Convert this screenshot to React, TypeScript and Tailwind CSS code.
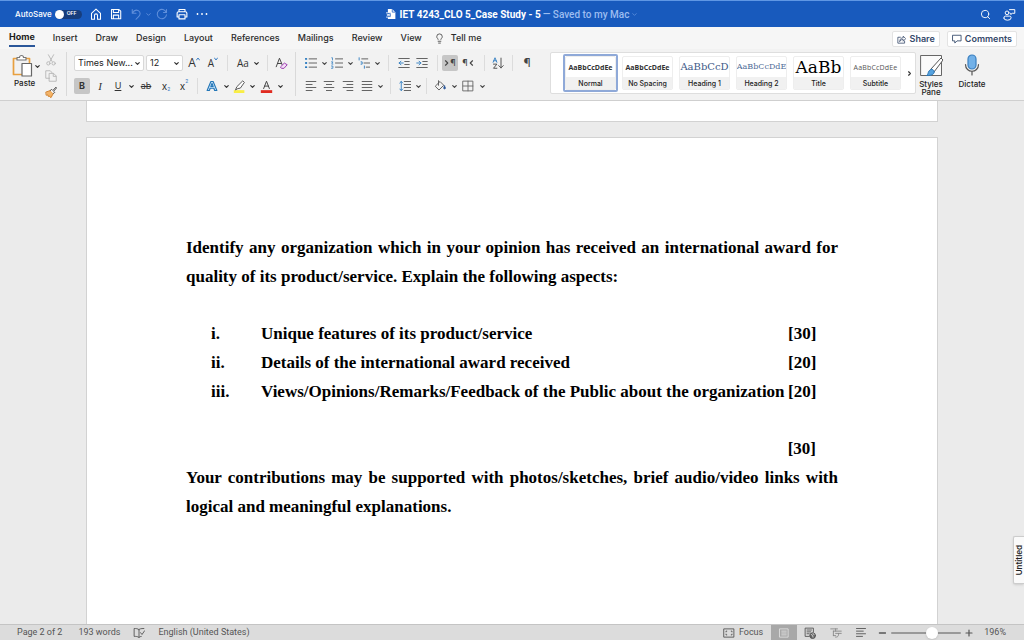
import React, { useState } from "react";
import { ChevronDown, ChevronRight, Search, Lightbulb } from "lucide-react";

type Kids = { children?: React.ReactNode };

function Svg({ children, className = "size-3", box = "0 0 16 16" }: Kids & { className?: string; box?: string }) {
  return (
    <svg
      viewBox={box}
      className={`shrink-0 ${className}`}
      fill="none"
      stroke="currentColor"
      strokeWidth="1.2"
      strokeLinecap="round"
      strokeLinejoin="round"
      aria-hidden="true"
    >
      {children}
    </svg>
  );
}

function Tool({ label, w = "w-5", className = "", children }: Kids & { label: string; w?: string; className?: string }) {
  return (
    <button type="button" aria-label={label} className={`flex h-4 shrink-0 items-center justify-center ${w} ${className}`}>
      {children}
    </button>
  );
}

function More({ label, w = "w-2" }: { label: string; w?: string }) {
  return (
    <Tool label={`${label} options`} w={w}>
      <ChevronDown className="size-[7px] shrink-0" strokeWidth={4} />
    </Tool>
  );
}

function Rule({ w = "w-3" }: { w?: string }) {
  return (
    <span className={`flex h-4 shrink-0 justify-center ${w}`}>
      <span className="w-px bg-[#dcdcdc]" />
    </span>
  );
}

function GroupRule() {
  return <span className="h-11 w-px shrink-0 bg-[#d9d9d9]" />;
}

function Lines({ d }: { d: string }) {
  return (
    <Svg>
      <path d={d} stroke="#555" strokeLinecap="butt" />
    </Svg>
  );
}

const tabs = ["Home", "Insert", "Draw", "Design", "Layout", "References", "Mailings", "Review", "View"];

const styleCards = [
  { name: "Normal", sample: "AaBbCcDdEe", look: "font-['Open_Sans',sans-serif] text-[7px] font-bold text-[#333]" },
  { name: "No Spacing", sample: "AaBbCcDdEe", look: "font-['Open_Sans',sans-serif] text-[7px] font-bold text-[#333]" },
  { name: "Heading 1", sample: "AaBbCcD", look: "font-['DejaVu_Serif',serif] text-[10px] text-[#3d5a87]" },
  { name: "Heading 2", sample: "AaBbCcDdE", look: "font-['DejaVu_Serif',serif] text-[8px] text-[#4f6d97]" },
  { name: "Title", sample: "AaBb", look: "font-['DejaVu_Serif',serif] text-[17px] text-black" },
  { name: "Subtitle", sample: "AaBbCcDdEe", look: "font-['Open_Sans',sans-serif] text-[7px] tracking-wide text-[#555]" },
];

const aspects = [
  { no: "i.", text: "Unique features of its product/service", marks: "[30]" },
  { no: "ii.", text: "Details of the international award received", marks: "[20]" },
  { no: "iii.", text: "Views/Opinions/Remarks/Feedback of the Public about the organization", marks: "[20]" },
];

function TitleBar() {
  return (
    <header className="grid h-[27px] shrink-0 grid-cols-[1fr_auto_1fr] items-center border-t border-[#5f97e4] bg-[#185abd] text-white">
      <div className="flex items-center pl-[15px]">
        <span className="text-[8px] font-medium">AutoSave</span>
        <button
          type="button"
          role="switch"
          aria-checked="false"
          aria-label="AutoSave"
          className="mr-1 ml-[3px] flex h-[9px] w-[27px] items-center gap-[3px] rounded-full bg-[#173d7c] text-[5px] font-semibold"
        >
          <span className="size-[9px] rounded-full bg-white" />
          OFF
        </button>
        <Tool label="Home">
          <Svg>
            <path d="M2 7.2 8 1.5l6 5.7V15h-4V9.8a2 2 0 0 0-4 0V15H2Z" strokeWidth="1.4" />
          </Svg>
        </Tool>
        <Tool label="Save">
          <Svg>
            <path d="M2 2h10l2.3 2.3V14.3H2ZM4.5 2v4h7V2M4.5 14V9.5h7V14" strokeWidth="1.4" />
          </Svg>
        </Tool>
        <Tool label="Undo" className="text-[#5f8fdb]">
          <Svg>
            <path d="M3 2v5h5M3 7c2-3.5 5-5 8-3.5 3.5 2 3 5.5.5 8L8 15" strokeWidth="1.4" />
          </Svg>
        </Tool>
        <Tool label="Undo options" w="w-1.5" className="text-[#5f8fdb]">
          <ChevronDown className="size-[7px] shrink-0" strokeWidth={3} />
        </Tool>
        <Tool label="Redo" className="text-[#5f8fdb]">
          <Svg>
            <path d="M14 2v4h-4M13.7 6A6.2 6.2 0 1 0 14 9" strokeWidth="1.4" />
          </Svg>
        </Tool>
        <Tool label="Print">
          <Svg>
            <path d="M4 5V2h8v3M4 12H1.5V7a2 2 0 0 1 2-2h9a2 2 0 0 1 2 2v5H12M4 9h8v5.5H4Z" strokeWidth="1.5" />
          </Svg>
        </Tool>
        <Tool label="More commands">
          <Svg>
            <path d="M2 8h.01M8 8h.01M14 8h.01" strokeWidth="2.4" />
          </Svg>
        </Tool>
      </div>
      <h1 className="flex items-center font-['Roboto',sans-serif] text-[10px] font-bold whitespace-nowrap">
        <Svg className="mr-1 size-[10px]">
          <path d="M3 0h7l5 5v11H3Z" fill="#fff" stroke="none" />
          <path d="M10 0v5h5" stroke="#185abd" />
          <path d="M0 6h8v7H0Z" fill="#185abd" stroke="#fff" />
          <path d="m2 8 1 3 1-3 1 3 1-3" stroke="#fff" />
        </Svg>
        IET 4243_CLO 5_Case Study - 5
        <span className="ml-0.5 font-medium text-[#9dbdf0]">— Saved to my Mac</span>
        <ChevronDown className="ml-0.5 size-[7px] text-[#7ba5e8]" />
      </h1>
      <div className="flex items-center justify-end gap-1 pr-[5px]">
        <Tool label="Search">
          <Search className="size-[11px]" strokeWidth={2} />
        </Tool>
        <Tool label="Collaborate">
          <Svg className="size-[13px]">
            <circle cx="5" cy="6" r="2.3" />
            <path d="M1 12.500Q1 10 3 10h5q2 0 2 2 0 3-4.500 3T1 12.500M8 2h6.500v4.500h-3L9.500 8V6.500" />
          </Svg>
        </Tool>
      </div>
    </header>
  );
}

function TabBar() {
  return (
    <nav className="flex h-[22px] shrink-0 items-center justify-between bg-[#f6f6f6] pr-[7px] pl-[9px] text-[#2b2b2b]">
      <div className="flex h-full items-center gap-[18px] text-[9px] font-medium">
        {tabs.map((t, i) => (
          <button
            type="button"
            key={t}
            className={
              i === 0
                ? "flex h-5 items-center self-start border-b-2 border-[#2b579a] pt-0.5 font-bold text-[#1c1c1c]"
                : "flex h-full items-center"
            }
          >
            {t}
          </button>
        ))}
        <button type="button" className="-ml-1.5 flex items-center gap-1.5">
          <Lightbulb className="size-[11px]" strokeWidth={1.6} />
          Tell me
        </button>
      </div>
      <div className="flex gap-[7px] pt-0.5 text-[9px] font-semibold text-[#35496a]">
        <button type="button" className="flex h-4 items-center gap-1 rounded-xs border border-[#e3e3e3] bg-white px-1">
          <Svg className="size-[9px]">
            <path d="M6 4H1.5v10.500h12V11M5 11c0-4 2.500-6 6-6V2l4.500 4.500L11 11V8c-3 0-4.500.8-6 3Z" strokeWidth="1.4" />
          </Svg>
          Share
        </button>
        <button type="button" className="flex h-4 items-center gap-[3px] rounded-xs border border-[#e3e3e3] bg-white px-1">
          <Svg className="size-[10px]">
            <path d="M1.5 2h13v9H8l-3.500 3.500V11h-3Z" strokeWidth="1.4" />
          </Svg>
          Comments
        </button>
      </div>
    </nav>
  );
}

function ClipboardGroup() {
  return (
    <div className="flex w-[66px] shrink-0 justify-between pr-[9px] pl-3">
      <div className="flex flex-col pt-0.5">
        <div className="flex items-center">
          <button type="button" aria-label="Paste clipboard">
            <Svg className="h-6 w-[22px]" box="0 0 22 24">
              <path d="M5 4.500H1.500v16h8M14 4.500h3.500v4" stroke="#e8a040" strokeWidth="1.7" />
              <path d="M5 6V3.500h2.500a2 2 0 0 1 4 0H14V6Z" fill="#fff" stroke="#777" />
              <path d="M10 9.500h9.500v12.500H10Z" fill="#fff" stroke="#666" />
            </Svg>
          </button>
          <More label="Paste" w="w-1.5" />
        </div>
        <span className="pl-0.5 text-[8px] leading-[10px] font-medium text-[#222]">Paste</span>
      </div>
      <div className="flex flex-col items-center">
        <Tool label="Cut" w="w-3" className="text-[#b5b5b5]">
          <Svg>
            <path d="m4.500 1 5 9M11.500 1l-5 9" />
            <circle cx="4.500" cy="12.500" r="2.2" />
            <circle cx="11.500" cy="12.500" r="2.2" />
          </Svg>
        </Tool>
        <Tool label="Copy" w="w-3" className="text-[#b5b5b5]">
          <Svg>
            <path d="M6 11H1V1h6l2 2v1M6 4.500h5.500L15 8v7H6ZM11 5v3.500h3.500" />
          </Svg>
        </Tool>
        <Tool label="Format painter" w="w-3">
          <Svg>
            <path d="M1.5 8 7 6l4 4-3 5.500-2.500-2-1 .5-.5-2-2 .2Z" fill="#f3b367" stroke="#cf7f2a" />
            <path d="m7 6 2-1.500L10.500 6l4-4.500 1 1-4 4.500 1.500 1.500L11 10" stroke="#444" fill="#fff" />
          </Svg>
        </Tool>
      </div>
    </div>
  );
}

function FontGroup() {
  return (
    <div className="flex w-[228px] shrink-0 flex-col gap-[7px] pt-[3px] pl-[7px] text-[#333]">
      <div className="flex items-center">
        <label className="relative mr-0.5 flex h-4 w-[70px] items-center rounded-xs border border-[#d8d8d8] bg-white">
          <select aria-label="Font" className="w-full appearance-none pl-[3px] text-[9px] text-[#222]">
            <option>Times New...</option>
          </select>
          <ChevronDown className="pointer-events-none absolute right-0.5 size-[7px]" strokeWidth={4} />
        </label>
        <label className="relative flex h-4 w-[37px] items-center rounded-xs border border-[#d8d8d8] bg-white">
          <select aria-label="Font size" className="w-full appearance-none pl-[3px] text-[9px] text-[#222]">
            <option>12</option>
          </select>
          <ChevronDown className="pointer-events-none absolute right-0.5 size-[7px]" strokeWidth={4} />
        </label>
        <Tool label="Increase font size" w="w-[22px]">
          <span className="font-['Open_Sans',sans-serif] text-[12px]">A</span>
          <Svg className="mb-2 size-1" box="0 0 8 8"><path d="m1 6 3-4 3 4" stroke="#3b7fc4" strokeWidth="2" /></Svg>
        </Tool>
        <Tool label="Decrease font size" w="w-4">
          <span className="font-['Open_Sans',sans-serif] text-[10px]">A</span>
          <Svg className="mb-2 size-1" box="0 0 8 8"><path d="m1 2 3 4 3-4" stroke="#3b7fc4" strokeWidth="2" /></Svg>
        </Tool>
        <Rule />
        <Tool label="Change case"><span className="font-['Open_Sans',sans-serif] text-[10px]">Aa</span></Tool>
        <More label="Change case" w="w-1.5" />
        <Rule w="w-4" />
        <Tool label="Clear formatting" w="w-3">
          <Svg className="size-[13px]">
            <path d="m1.500 12 4-10.500L9 10M3 8h5" stroke="#444" />
            <path d="m7 12 4.500-4.500 3.500 2L11 14H8.500Z" fill="#f4dcf7" stroke="#9b3fb0" />
          </Svg>
        </Tool>
      </div>
      <div className="flex items-center">
        <Tool label="Bold" w="w-4" className="rounded-xs bg-[#c6c6c6] text-[9px] font-bold">B</Tool>
        <Tool label="Italic"><span className="font-['Liberation_Serif',serif] text-[11px] italic">I</span></Tool>
        <Tool label="Underline" w="w-4"><span className="text-[9px] underline">U</span></Tool>
        <More label="Underline" w="w-2.5" />
        <Tool label="Strikethrough"><span className="text-[9px] line-through">ab</span></Tool>
        <Tool label="Subscript">
          <span className="text-[10px]">x</span><span className="pt-2 text-[5px] text-[#3b7fc4]">2</span>
        </Tool>
        <Tool label="Superscript" w="w-4">
          <span className="text-[10px]">x</span><span className="pb-2 text-[5px] text-[#3b7fc4]">2</span>
        </Tool>
        <Rule w="w-2.5" />
        <Tool label="Text effects">
          <Svg>
            <path d="M1.5 14 6.500 2h3l5 12h-3l-1-3h-5l-1 3ZM6.500 8.500h3L8 4.500Z" fill="#cfe6fa" stroke="#2376b7" strokeWidth="1.5" />
          </Svg>
        </Tool>
        <More label="Text effects" />
        <Tool label="Highlight" w="w-[18px]">
          <Svg className="size-[13px]">
            <path d="M1 12.500h13V16H1Z" fill="#f9ee45" stroke="none" />
            <path d="m5 8 7-7 2 2-5 7-3 .5-2.500 1.500Z" fill="#fff" stroke="#555" />
          </Svg>
        </Tool>
        <More label="Highlight" />
        <Tool label="Font color">
          <Svg className="size-[13px]">
            <path d="M1 12.500h14V16H1Z" fill="#e02b20" stroke="none" />
            <path d="M4.500 10.500 8 1.500l3.500 9M5.500 7.500h5" stroke="#444" />
          </Svg>
        </Tool>
        <More label="Font color" />
      </div>
    </div>
  );
}

function ParagraphGroup() {
  return (
    <div className="flex w-[247px] shrink-0 flex-col gap-[7px] pt-[3px] pl-1.5 text-[#444]">
      <div className="flex items-center">
        <Tool label="Bullets" w="w-[18px]">
          <Svg>
            <path d="M5.500 2.500H16M5.500 8H16M5.500 13.500H16" stroke="#555" />
            <path d="M1 2.500h.8M1 8h.8M1 13.500h.8" stroke="#2b7bc0" strokeWidth="2.4" />
          </Svg>
        </Tool>
        <More label="Bullets" />
        <Tool label="Numbering" w="w-[18px]">
          <Svg>
            <path d="M6 2.500h10M6 8h10M6 13.500h10" stroke="#555" />
            <path d="M1 1h1v3M.5 6.500h2L1 9.500h1.500M.5 12h2v3h-2" stroke="#2b7bc0" strokeWidth="1" />
          </Svg>
        </Tool>
        <More label="Numbering" />
        <Tool label="Multilevel list" w="w-5">
          <Svg>
            <path d="M5 2.500h8M8 8h8M11 13.500h5" stroke="#555" />
            <path d="M1.5 1v3M4 6.500h1.500v3H4M8.500 12v3" stroke="#2b7bc0" />
          </Svg>
        </Tool>
        <More label="Multilevel list" w="w-1.5" />
        <Rule w="w-4" />
        <Tool label="Decrease indent" w="w-4">
          <Svg>
            <path d="M1 2h14M9 6h6M9 10h6M1 14h14" stroke="#555" />
            <path d="M7 8H1.500M4 5.500 1.500 8 4 10.500" stroke="#2b7bc0" />
          </Svg>
        </Tool>
        <Tool label="Increase indent">
          <Svg>
            <path d="M1 2h14M9 6h6M9 10h6M1 14h14" stroke="#555" />
            <path d="M1 8h5.500M4 5.500 6.500 8 4 10.500" stroke="#2b7bc0" />
          </Svg>
        </Tool>
        <Rule w="w-2.5" />
        <Tool label="Left to right" w="w-4" className="rounded-xs bg-[#c6c6c6] text-[9px]">
          <Svg className="size-1.5" box="0 0 8 8"><path d="m2 1 3 3-3 3" strokeWidth="1.5" /></Svg>¶
        </Tool>
        <Tool label="Right to left" className="text-[9px]">
          ¶<Svg className="size-1.5" box="0 0 8 8"><path d="M6 1 3 4l3 3" strokeWidth="1.5" /></Svg>
        </Tool>
        <Rule />
        <Tool label="Sort" w="w-4">
          <Svg>
            <path d="m1.500 7 2.500-6 2.500 6M2.500 5h3" stroke="#2b7bc0" />
            <path d="M2 9.500h4.500L2 15h4.500M12 1.500v13M9 11.500l3 3 3-3" stroke="#444" />
          </Svg>
        </Tool>
        <Rule />
        <Tool label="Show marks" w="w-[18px]" className="text-[12px]">¶</Tool>
      </div>
      <div className="flex items-center">
        <Tool label="Align left" w="w-[18px]"><Lines d="M1 2h14M1 6h9M1 10h14M1 14h9" /></Tool>
        <Tool label="Center" w="w-[18px]"><Lines d="M1 2h14M4 6h8M1 10h14M4 14h8" /></Tool>
        <Tool label="Align right"><Lines d="M1 2h14M6 6h9M1 10h14M6 14h9" /></Tool>
        <Tool label="Justify" w="w-[18px]"><Lines d="M1 2h14M1 6h14M1 10h14M1 14h14" /></Tool>
        <More label="Justify" />
        <Rule />
        <Tool label="Line spacing" w="w-[18px]">
          <Svg>
            <path d="M7 2h9M7 6h9M7 10h9M7 14h9" stroke="#555" />
            <path d="M3 2v12M1 4l2-2 2 2M1 12l2 2 2-2" stroke="#2b7bc0" />
          </Svg>
        </Tool>
        <More label="Line spacing" />
        <Rule w="w-2" />
        <Tool label="Shading">
          <Svg>
            <path d="m2 8 6-6 5 5-6 6ZM6 1v6" stroke="#555" />
            <path d="M14 8c2 3 1 4 0 4s-1.500-1.500 0-4Z" fill="#2b579a" stroke="#2b579a" />
          </Svg>
        </Tool>
        <More label="Shading" />
        <Tool label="Borders">
          <Svg><path d="M1.5 1.500h13v13h-13ZM8 1.500v13M1.500 8h13" stroke="#666" /></Svg>
        </Tool>
        <More label="Borders" />
      </div>
    </div>
  );
}

function StylesGallery() {
  const [picked, setPicked] = useState("Normal");
  return (
    <div className="ml-[7px] flex h-[42px] min-w-[366px] items-center rounded-xs border border-[#dedede] bg-white pl-3">
      <div className="flex items-center gap-0.5">
        {styleCards.map((s) => (
          <button
            type="button"
            key={s.name}
            onClick={() => setPicked(s.name)}
            className={`flex h-[38px] w-[55px] shrink-0 rounded-xs border ${
              picked === s.name ? "border-2 border-[#8fa9d8] p-0" : "border-transparent p-px"
            }`}
          >
            <span className="flex h-full w-full flex-col overflow-hidden rounded-xs border border-[#eeeeee] bg-white">
              <span className={`flex flex-1 items-center justify-center leading-none whitespace-nowrap ${s.look}`}>{s.sample}</span>
              <span className="h-3 bg-[#f1f1f1] text-center text-[7px] leading-[13px] font-medium whitespace-nowrap text-[#222]">{s.name}</span>
            </span>
          </button>
        ))}
      </div>
      <Tool label="More styles" w="w-3" className="text-[#333]">
        <ChevronRight className="size-[7px]" strokeWidth={4} />
      </Tool>
    </div>
  );
}

function Ribbon() {
  return (
    <section aria-label="Home ribbon" className="flex h-[52px] shrink-0 items-start border-b border-[#cfcfcf] bg-[#f2f2f2] pt-[3px] text-[#333]">
      <ClipboardGroup />
      <GroupRule />
      <FontGroup />
      <GroupRule />
      <ParagraphGroup />
      <StylesGallery />
      <button type="button" className="flex w-[30px] shrink-0 flex-col items-center text-[8px] leading-2 font-medium text-[#222]">
        <Svg className="mt-0.5 mb-[3px] size-[23px]" box="0 0 23 23">
          <path d="M1 1.500h20.500v20H1Z" fill="#fafafa" stroke="#666" strokeWidth="1" />
          <path d="m11 15 10-11 2 2-9 12Z" fill="#fff" stroke="#555" strokeWidth="1" />
          <path d="M7 21.500c1-1 1-3 2-4.500 2-2.500 4-2 5 0 1 2.500-2 5-7 4.500Z" fill="#55a2df" stroke="#2b75b3" strokeWidth="1" />
        </Svg>
        <span>Styles</span>
        <span>Pane</span>
      </button>
      <span className="ml-1"><GroupRule /></span>
      <button type="button" className="flex w-11 shrink-0 flex-col items-center text-[8px] leading-2 font-medium text-[#222]">
        <Svg className="mt-0.5 mb-[3px] h-[23px] w-4" box="0 0 16 23">
          <path d="M1.5 10.500c0 9 13 9 13 0M8 17.500V21" stroke="#555" />
          <rect x="4" y="1" width="8" height="14" rx="4" fill="#72b1e8" stroke="#3a7fbf" />
        </Svg>
        Dictate
      </button>
    </section>
  );
}

function Document() {
  return (
    <main className="relative flex min-h-0 flex-1 flex-col items-center gap-[15px] overflow-hidden bg-[#ebebeb]">
      <div className="h-[21px] w-[852px] max-w-full shrink-0 border border-t-0 border-[#d2d2d2] bg-white" />
      <article className="w-[852px] max-w-full flex-1 border border-b-0 border-[#d2d2d2] bg-white px-[99px] pt-[95px] font-['Liberation_Serif',serif] text-[17px] leading-[29px] font-bold text-black">
        <p className="text-justify">
          Identify any organization which in your opinion has received an international award for quality of its
          product/service. Explain the following aspects:
        </p>
        <ol className="mt-7">
          {aspects.map((a) => (
            <li key={a.no} className="grid grid-cols-[50px_1fr_50px] pl-[25px]">
              <span>{a.no}</span>
              <span className="whitespace-nowrap">{a.text}</span>
              <span>{a.marks}</span>
            </li>
          ))}
        </ol>
        <p className="mt-7 pr-[22px] text-right">[30]</p>
        <p className="text-justify">
          Your contributions may be supported with photos/sketches, brief audio/video links with logical and
          meaningful explanations.
        </p>
      </article>
      <button
        type="button"
        className="absolute right-0 bottom-10 flex h-12 w-[11px] items-center justify-center rounded-l-xs border border-r-0 border-[#cccccc] bg-[#fafafa] text-[8px] font-semibold text-[#222] shadow-sm"
      >
        <span className="rotate-180 [writing-mode:vertical-rl]">Untitled</span>
      </button>
    </main>
  );
}

function StatusBar() {
  return (
    <footer className="flex h-4 shrink-0 items-center justify-between border-t border-[#c4c4c4] bg-[#dcdcdc] pr-[18px] pl-[17px] font-['Roboto',sans-serif] text-[9px] text-[#555]">
      <div className="flex items-center">
        <span>Page 2 of 2</span>
        <span className="ml-4">193 words</span>
        <Tool label="Proofing" w="w-[38px]">
          <Svg>
            <path d="M8 3.500v10M8 3.500C6 2 4 2 1.500 2v10.500c2.500 0 4.500 0 6.500 1.500 1-1 2-1.500 3-1.500M8 3.500C9 2.500 10 2 14.500 2M10 7.500l2 2.500 3.500-5" />
          </Svg>
        </Tool>
        <span>English (United States)</span>
      </div>
      <div className="flex h-full items-center">
        <button type="button" className="mr-2 flex items-center gap-1">
          <Svg>
            <path d="M1.5 2.500h13v11h-13ZM5 5.500H4v1M11 5.500h1v1M5 10.500H4v-1M11 10.500h1v-1" />
          </Svg>
          Focus
        </button>
        <button type="button" aria-label="Print layout" className="flex h-full w-[26px] items-center justify-center bg-[#a8a8a8] text-[#dedede]">
          <Svg><path d="M2.500 2.500h11v11h-11ZM5 5.500h6M5 8h6M5 10.500h6" /></Svg>
        </button>
        <Tool label="Web layout" w="w-[26px]">
          <Svg>
            <path d="M7 12.500H1.500v-11h11V7M4 4h6M4 6.500h5M4 9h3" />
            <circle cx="11.500" cy="11.500" r="3.8" fill="#666" />
            <path d="m9.500 10 2 1 .5 2.500M12 8.500l1.500 2" stroke="#ddd" />
          </Svg>
        </Tool>
        <Tool label="Outline" w="w-[26px]" className="text-[#888]">
          <Svg><path d="M1 2.500h9M4.500 5.500H15M7.500 8.500H15M4.500 11.500h3M4.500 5.500v6M7.500 13.500c3 0 4-1 4-5M7.500 2.500v3" /></Svg>
        </Tool>
        <Tool label="Draft" w="w-6">
          <Svg><path d="M2 2h12M2 5.500h9M2 9h12M2 12.500h8" /></Svg>
        </Tool>
        <Tool label="Zoom out" w="w-[18px]"><Svg className="size-2"><path d="M3 8h12" strokeWidth="3" /></Svg></Tool>
        <input
          type="range"
          aria-label="Zoom"
          min={0}
          max={100}
          defaultValue={60}
          className="h-3 w-[70px] appearance-none bg-transparent [&::-webkit-slider-runnable-track]:h-0.5 [&::-webkit-slider-runnable-track]:rounded-full [&::-webkit-slider-runnable-track]:bg-[#999] [&::-webkit-slider-thumb]:-mt-[5px] [&::-webkit-slider-thumb]:size-3 [&::-webkit-slider-thumb]:appearance-none [&::-webkit-slider-thumb]:rounded-full [&::-webkit-slider-thumb]:bg-white [&::-webkit-slider-thumb]:shadow"
        />
        <Tool label="Zoom in" w="w-4"><Svg className="size-2"><path d="M2 8h12M8 2v12" strokeWidth="2.4" /></Svg></Tool>
        <span className="ml-[7px]">196%</span>
      </div>
    </footer>
  );
}

export default function App() {
  return (
    <div className="flex h-screen flex-col overflow-hidden font-['Inter',sans-serif]">
      <TitleBar />
      <TabBar />
      <Ribbon />
      <Document />
      <StatusBar />
    </div>
  );
}
